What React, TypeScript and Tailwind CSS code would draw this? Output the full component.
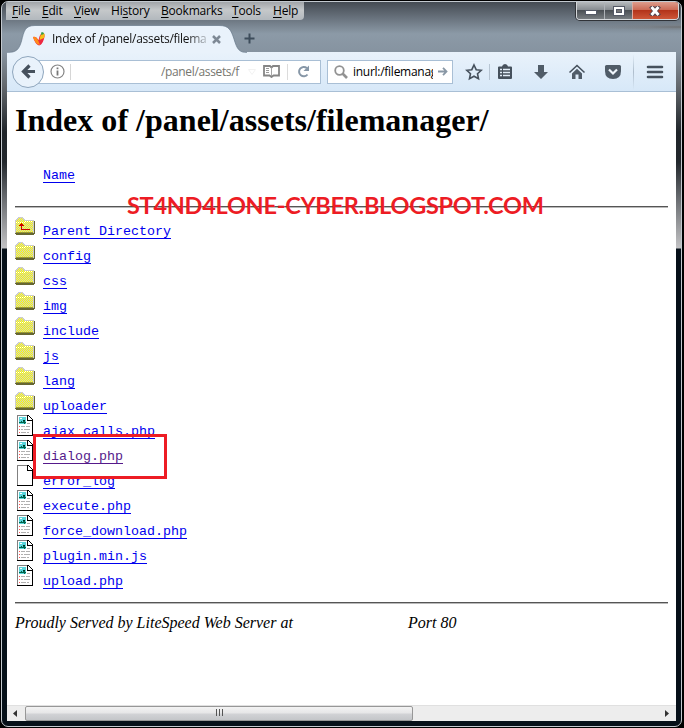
import type { ReactNode } from "react";
import clsx from "clsx";

type IconKind = "parent" | "folder" | "script" | "blank";

interface Entry {
  name: string;
  icon: IconKind;
  visited?: boolean;
}

const MENUS = ["File", "Edit", "View", "History", "Bookmarks", "Tools", "Help"];
const ACCESS_KEYS = [0, 0, 0, 2, 0, 0, 0];
const MENU_WIDTHS = ["w-[30px]", "w-[32px]", "w-[37px]", "w-[50px]", "w-[71px]", "w-[41px]", "w-[36px]"];

const ENTRIES: Entry[] = [
  { name: "Parent Directory", icon: "parent" },
  { name: "config", icon: "folder" },
  { name: "css", icon: "folder" },
  { name: "img", icon: "folder" },
  { name: "include", icon: "folder" },
  { name: "js", icon: "folder" },
  { name: "lang", icon: "folder" },
  { name: "uploader", icon: "folder" },
  { name: "ajax_calls.php", icon: "script" },
  { name: "dialog.php", icon: "script", visited: true },
  { name: "error_log", icon: "blank" },
  { name: "execute.php", icon: "script" },
  { name: "force_download.php", icon: "script" },
  { name: "plugin.min.js", icon: "script" },
  { name: "upload.php", icon: "script" },
];

export default function App() {
  return (
    <div className="h-[728px] w-[684px] overflow-hidden bg-black pt-px pr-[2px] pb-px pl-px">
      <div className="flex h-[726px] w-[681px] flex-col overflow-hidden rounded-[7px] border border-[#c3c9cf] bg-[linear-gradient(180deg,#454b53_0px,#8c9aa7_32px,#8693a0_50px,#62676c_85px,#20252a_130px,#22272c_160px,#6f7276_200px,#c2c2c4_246px,#061019_247px)]">
        <TitleBar />
        <div className="mx-[5px] mb-[5px] flex flex-1 flex-col bg-white">
          <Toolbar />
          <Listing />
          <ScrollBar />
        </div>
      </div>
    </div>
  );
}

function TitleBar() {
  return (
    <div className="relative h-[50px] shrink-0 bg-[radial-gradient(ellipse_at_right,#6b6b6bcc_0px,#77787a66_35px,transparent_90px)] font-['Open_Sans',sans-serif]">
      <div className="flex items-start justify-between">
        <div className="ml-[4px] flex h-[18px] w-[298px] rounded-br-[4px] bg-[linear-gradient(180deg,#a1a5a9,#c5c8ca_45%,#b2b8bd)] pl-[6px] text-[12px] leading-[18px] tracking-[-0.2px] text-black">
          {MENUS.map((m, i) => (
            <span key={m} className={clsx("shrink-0 whitespace-nowrap", MENU_WIDTHS[i])}>
              {m.slice(0, ACCESS_KEYS[i])}
              <span className="underline underline-offset-2">{m[ACCESS_KEYS[i]]}</span>
              {m.slice(ACCESS_KEYS[i] + 1)}
            </span>
          ))}
        </div>
        <WindowButtons />
      </div>
      <div className="absolute top-[23px] left-[5px] h-[28px] w-[236px]">
        <svg className="absolute inset-0" width="240" height="28" viewBox="0 0 240 28">
          <path d="M0 27.5C9 27.5 12 25 14.500 16C17 6 18 .5 28 .5H212C222 .5 224 5 227 14C230 24 232 27.500 240 27.500V28H0Z" fill="#e9f2fb" />
          <path d="M0 27.5C9 27.5 12 25 14.500 16C17 6 18 .5 28 .5H212C222 .5 224 5 227 14C230 24 232 27.500 240 27.500" fill="none" stroke="#68798a" strokeOpacity=".7" />
        </svg>
        <div className="relative flex h-[28px] items-center pl-[25px]">
          <Favicon />
          <span className="ml-[6px] w-[155px] overflow-hidden text-[12px] tracking-[-0.27px] whitespace-nowrap text-[#111] [mask-image:linear-gradient(90deg,#000_135px,transparent_160px)]">
            Index of /panel/assets/filema
          </span>
          <svg className="ml-[5px]" width="9" height="9" viewBox="0 0 9 9">
            <path d="M1 1 8 8M8 1 1 8" stroke="#7e8995" strokeWidth="2.5" />
          </svg>
        </div>
      </div>
      <svg className="absolute top-[31px] left-[242px]" width="11" height="11" viewBox="0 0 11 11">
        <path d="M5.500.5V10.500M.5 5.500H10.500" stroke="#3d4c5b" strokeWidth="2" />
      </svg>
    </div>
  );
}

function Favicon() {
  return (
    <svg width="14" height="14" viewBox="0 0 14 14">
      <path d="M1 5Q4 4 6.500 8Q7 4 9.500 1Q14 0 12 7Q10 13 7 13.500Q3 12 1 5Z" fill="#ed2840" />
      <path d="M1 5Q4 4 6 8L8 13Q3 12 1 5Z" fill="#ff8d19" />
      <path d="M9.500 1Q14 0 12 6L7.500 8Q8 4 9.500 1Z" fill="#f7be17" />
      <path d="M9.500 0Q12 0 12 2L9 3Z" fill="#319c4f" />
    </svg>
  );
}

function WindowButtons() {
  return (
    <div className="mr-[2px] flex h-[18px] w-[103px] overflow-hidden rounded-b-[4px] border border-t-0 border-[#d5d8db] shadow-[0_0_0_1px_#303338]">
      <div className="flex w-[28px] items-center justify-center border-r border-[#aeb2b7] bg-[linear-gradient(180deg,#b6babd,#888d92_45%,#4b5055_50%,#777c80)]">
        <svg className="mt-[4px]" width="12" height="5" viewBox="0 0 12 5">
          <rect x=".5" y=".5" width="11" height="4" fill="#fff" stroke="#555a67" />
        </svg>
      </div>
      <div className="flex w-[27px] items-center justify-center bg-[linear-gradient(180deg,#b6babd,#888d92_45%,#4b5055_50%,#777c80)]">
        <svg width="12" height="10" viewBox="0 0 12 10">
          <rect x=".5" y=".5" width="11" height="9" fill="#fff" stroke="#555a67" />
          <rect x="3.500" y="3.500" width="5" height="3" fill="#777" stroke="#555a67" />
        </svg>
      </div>
      <div className="flex flex-1 items-center justify-center border-l border-[#ddaba0] bg-[linear-gradient(180deg,#dd9d8d,#cc6b56_45%,#b3341b_50%,#cd5739)]">
        <svg className="mr-[2px]" width="12" height="10" viewBox="0 0 12 10">
          <path d="M2 0 10 10M10 0 2 10" stroke="#54424c" strokeWidth="4.800" />
          <path d="M2.500 1 9.500 9M9.500 1 2.500 9" stroke="#fff" strokeWidth="2.900" />
        </svg>
      </div>
    </div>
  );
}

function Toolbar() {
  return (
    <div className="flex h-[40px] shrink-0 items-center border-b border-[#a9bfd5] bg-gradient-to-b from-[#e9f2fb] to-[#d7e8f8] font-['Open_Sans',sans-serif] text-[12px]">
      <div className="relative z-10 ml-[5px] flex size-[32px] shrink-0 items-center justify-center rounded-full border border-[#8fa6bd] bg-[#e9f2fb]">
        <svg width="15" height="15" viewBox="0 0 15 15">
          <path d="M8.500 1.500 2.500 7.500 8.500 13.500M3 7.500H14" fill="none" stroke="#46515d" strokeWidth="3.200" />
        </svg>
      </div>
      <div className="-ml-[6px] flex h-[24px] w-[283px] shrink-0 items-center border border-[#a9bfd5] bg-white pl-[11px]">
        <svg width="15" height="15" viewBox="0 0 15 15" className="shrink-0">
          <circle cx="7.500" cy="7.500" r="6.500" fill="none" stroke="#858585" strokeWidth="1.200" />
          <path d="M7.500 6.500V11.500M7.500 3.500V5.200" stroke="#777" strokeWidth="1.800" />
        </svg>
        <span className="ml-[5px] h-[16px] w-px bg-[#d6d6d6]" />
        <span className="ml-[90px] w-[79px] overflow-hidden tracking-[-0.35px] whitespace-nowrap text-[#76766f]">/panel/assets/f</span>
        <svg className="ml-[8px]" width="8" height="6" viewBox="0 0 8 6">
          <path d="M.5.5H7.500L4 5.500Z" fill="none" stroke="#f2f2f2" />
        </svg>
        <svg className="ml-[7px] shrink-0" width="17" height="13" viewBox="0 0 17 13">
          <path d="M8.500 2.500 7 1H1V10.500H6.500L8.500 12 10.500 10.500H16V1H10L8.500 2.500" fill="none" stroke="#858585" strokeWidth="1.800" />
          <path d="M8.500 2.500V11" stroke="#a5a5a5" />
          <path d="M3 3.500H6M3 5.500H6M3 7.500H6" stroke="#999" />
        </svg>
        <span className="ml-[7px] h-[16px] w-px bg-[#dcdcdc]" />
        <svg className="ml-[9px]" width="13" height="13" viewBox="0 0 13 13">
          <path d="M10.500 9.500A4.700 4.700 0 1 1 9.800 3" fill="none" stroke="#8797a7" strokeWidth="2" />
          <path d="M12 .5V6H6.500Z" fill="#8797a7" />
        </svg>
      </div>
      <div className="ml-[6px] flex h-[24px] w-[126px] shrink-0 items-center border border-[#a9bfd5] bg-white pl-[6px]">
        <svg width="14" height="14" viewBox="0 0 14 14" className="shrink-0">
          <circle cx="5.500" cy="5.500" r="4.300" fill="none" stroke="#929292" strokeWidth="1.800" />
          <path d="M8.500 8.500 13 13" stroke="#929292" strokeWidth="2.600" />
        </svg>
        <span className="ml-[5px] w-[80px] overflow-hidden tracking-[-0.27px] whitespace-nowrap text-black">inurl:/filemanag</span>
        <svg className="ml-[5px] shrink-0" width="10" height="9" viewBox="0 0 10 9">
          <path d="M5 .8 8.500 4.500 5 8.200M8 4.500H0" fill="none" stroke="#8997a5" strokeWidth="1.800" />
        </svg>
      </div>
      <ToolIcon className="ml-[12px]">
        <path d="M9 2 11.200 6.700 16.200 7.300 12.500 10.700 13.500 15.700 9 13.200 4.500 15.700 5.500 10.700 1.800 7.300 6.800 6.700Z" fill="none" stroke="#46515d" strokeWidth="1.600" />
      </ToolIcon>
      <span className="ml-[6px] h-[16px] w-px bg-[#b7c5d3]" />
      <ToolIcon className="ml-[6px]">
        <path d="M3 3.500H6Q6.500 1 9 1T12 3.500H15Q16 3.500 16 4.500V15Q16 16 15 16H3Q2 16 2 15V4.500Q2 3.500 3 3.500Z" fill="#46515d" />
        <path d="M4 6.500H6M7 6.500H14M4 9.500H6M7 9.500H14M4 12.500H6M7 12.500H14" stroke="#e2edf8" strokeWidth="1.700" />
      </ToolIcon>
      <ToolIcon className="ml-[18px]">
        <path d="M6 2H12V9H16L9 16 2 9H6Z" fill="#505c68" />
      </ToolIcon>
      <ToolIcon className="ml-[18px]">
        <path d="M1.500 9.500 9 2.500 16.500 9.500" fill="none" stroke="#46515d" strokeWidth="1.600" />
        <path d="M4 10.500 9 5.800 14 10.500V16H10.500V11.500H7.500V16H4Z" fill="#505c68" />
      </ToolIcon>
      <ToolIcon className="ml-[18px]">
        <path d="M2.500 2H15.500Q17 2 17 3.500V8Q17 16 9 16T1 8V3.500Q1 2 2.500 2Z" fill="#505c68" />
        <path d="M5 6.500 9 10.500 13 6.500" fill="none" stroke="#f0f6fc" strokeWidth="2.200" />
      </ToolIcon>
      <span className="ml-[11px] h-[36px] w-px bg-gradient-to-b from-transparent via-[#aebdcc] to-transparent" />
      <ToolIcon className="ml-[12px]">
        <path d="M2 4H16M2 9H16M2 14H16" stroke="#46515d" strokeWidth="2.600" strokeLinecap="round" />
      </ToolIcon>
    </div>
  );
}

function ToolIcon({ className, children }: { className?: string; children: ReactNode }) {
  return (
    <svg className={clsx("shrink-0", className)} width="18" height="18" viewBox="0 0 18 18">
      {children}
    </svg>
  );
}

function Listing() {
  return (
    <div className="relative flex-1 pr-[8px] pl-[8px]">
      <h1 className="pt-[10px] font-['Liberation_Serif',serif] text-[32px] leading-[37px] font-bold tracking-[0.02px] whitespace-nowrap text-black">
        Index of /panel/assets/filemanager/
      </h1>
      <div className="mt-[28px] ml-[28px] flex h-[16px] font-['Liberation_Mono',monospace] text-[13.33px] leading-[18px]">
        <a className="h-[16px] border-b border-[#0000ee] text-[#0000ee]">Name</a>
      </div>
      <Rule className="mt-[23px]" />
      <div className="mt-[7px]">
        {ENTRIES.map((e) => (
          <div key={e.name} className="flex h-[25px] font-['Liberation_Mono',monospace] text-[13.33px] leading-[18px]">
            <div className="w-[28px] shrink-0">
              <EntryIcon kind={e.icon} />
            </div>
            <a
              className={clsx(
                "mt-[8px] h-[16px] border-b",
                e.visited ? "border-[#551a8b] text-[#551a8b]" : "border-[#0000ee] text-[#0000ee]",
              )}
            >
              {e.name}
            </a>
          </div>
        ))}
      </div>
      <Rule className="mt-[12px]" />
      <p className="mt-[9px] flex font-['Liberation_Serif',serif] text-[16px] leading-[20px] text-black italic">
        <span className="w-[393px]">Proudly Served by LiteSpeed Web Server at</span>
        <span>Port 80</span>
      </p>

      <div className="absolute top-[97px] left-[120px] font-['Lato',sans-serif] text-[23.500px] leading-[32px] font-bold tracking-[-0.28px] whitespace-nowrap text-[#ed1c24]">
        ST4ND4LONE-CYBER.BLOGSPOT.COM
      </div>
      <div className="absolute top-[342px] left-[26px] h-[45px] w-[134px] border-[3px] border-[#ed1c24]" />
    </div>
  );
}

function Rule({ className }: { className?: string }) {
  return <div className={clsx("h-[2px] w-[653px] border-t border-b border-t-[#555] border-b-[#b9b9b9]", className)} />;
}

function EntryIcon({ kind }: { kind: IconKind }) {
  if (kind === "folder" || kind === "parent") {
    return (
      <svg className="mt-px" width="20" height="22" viewBox="0 0 20 22" shapeRendering="crispEdges">
        <defs>
          <pattern id="dither" width="2" height="2" patternUnits="userSpaceOnUse">
            <rect width="2" height="2" fill="#cccccc" />
            <rect width="1" height="1" fill="#ffff00" />
            <rect x="1" y="1" width="1" height="1" fill="#ffff00" />
          </pattern>
        </defs>
        <path d="M19 5H20V18H19V19H1V18H0V17H19Z" fill="#666633" />
        <path d="M0 4H1V3H2V2H3V1H8V2H9V3H10V4H19V17H0Z" fill="#cccccc" />
        <path d="M1 4H2V3H3V2H8V3H9V5H18V17H1Z" fill="url(#dither)" />
        <path d="M1 16H18V17H1Z" fill="#999933" />
        <path d="M1 6H10V5H18" fill="none" stroke="#fff" strokeDasharray="1 1" />
        {kind === "parent" ? (
          <path d="M6 7H7V8H8V9H9V10H7V13H15V14H6V10H4V9H5V8H6Z" fill="#cc0000" />
        ) : null}
      </svg>
    );
  }
  return (
    <svg width="20" height="22" viewBox="0 0 20 22" shapeRendering="crispEdges">
      <path d="M2 0H13L18 5V21H2Z" fill="#fff" />
      <path d="M2 0H13V1H3V20H2Z" fill="#808080" />
      <path d="M2 20H17V6H18V21H2Z" fill="#000" />
      <path d="M12 0H13V5H18V6H12ZM13 0H14V1H13ZM14 1H15V2H14ZM15 2H16V3H15ZM16 3H17V4H16ZM17 4H18V5H17Z" fill="#000" />
      {kind === "script" ? (
        <>
          <rect x="4" y="2" width="7" height="7" fill="#5cd6dc" />
          <path d="M4 7H6V6H7V7H8V5H10V7H11V8H10V9H9V8H4Z" fill="#00664d" />
          <path d="M5 3H7V4H5Z" fill="#fff" />
          <path d="M8 5H10V6H8Z" fill="#003322" />
          <path d="M12 8.500H15M6 11.500H10M11 11.500H15M6 14.500H8M9 14.500H15M6 17.500H11M12 17.500H14" stroke="#b0b0b0" />
          <path d="M4 11H5V12H4ZM4 14H5V15H4ZM4 17H5V18H4Z" fill="#ff5050" />
        </>
      ) : null}
    </svg>
  );
}

function ScrollBar() {
  return (
    <div className="flex h-[16px] shrink-0 items-center border-t border-[#e0e0e0] bg-[#ededed]">
      <svg className="ml-[6px] mr-[8px]" width="4" height="7" viewBox="0 0 4 7">
        <path d="M4 0V7L0 3.500Z" fill="#333" />
      </svg>
      <div className="flex h-[15px] w-[388px] items-center justify-center rounded-[2px] border border-[#979797] bg-[linear-gradient(180deg,#f3f3f3,#e6e6e7_48%,#d2d3d6_52%,#c4c6c9)]">
        <div className="mb-[2px] flex gap-[2px]">
          <span className="h-[7px] w-px bg-[#555]" />
          <span className="h-[7px] w-px bg-[#555]" />
          <span className="h-[7px] w-px bg-[#555]" />
        </div>
      </div>
      <svg className="mr-[7px] ml-auto" width="4" height="7" viewBox="0 0 4 7">
        <path d="M0 0V7L4 3.500Z" fill="#333" />
      </svg>
    </div>
  );
}
